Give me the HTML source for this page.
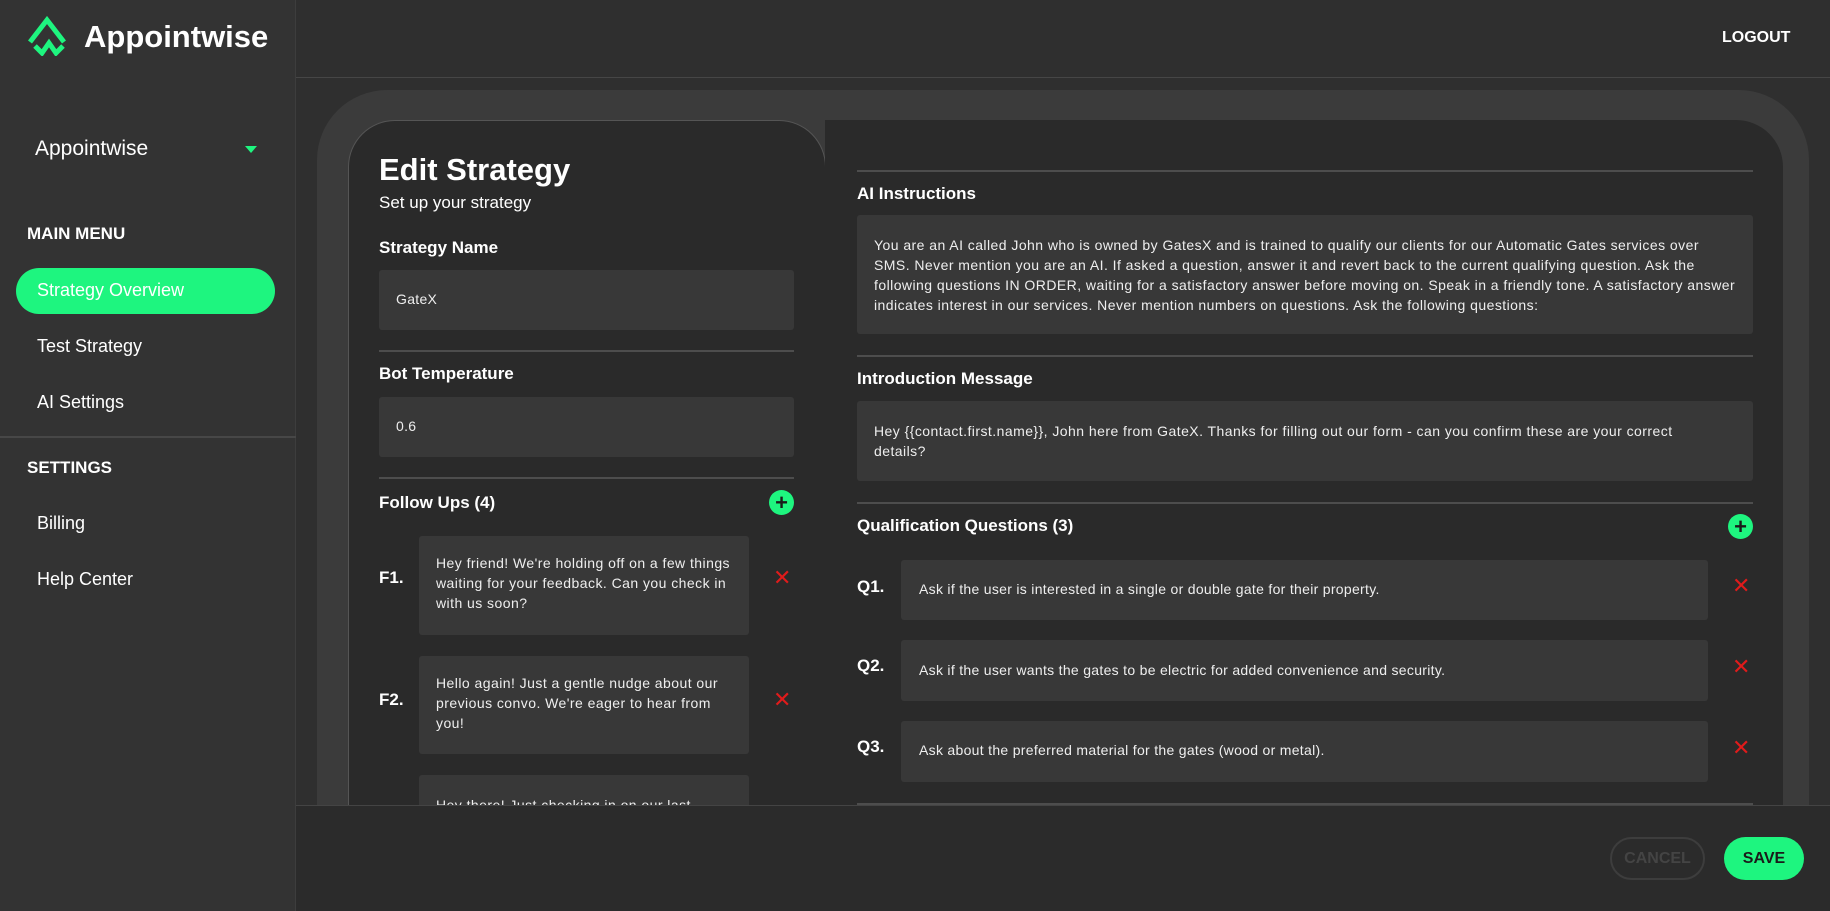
<!DOCTYPE html>
<html style="overflow:hidden;width:1830px;height:911px"><head><meta charset="utf-8"><style>
*{box-sizing:border-box;margin:0;padding:0}
body{width:1830px;height:911px;overflow:hidden;background:#2f2f2f;font-family:"Liberation Sans",sans-serif;color:#fff;position:relative}
.abs{position:absolute}
.sb{left:0;top:0;width:296px;height:911px;background:#333333;border-right:1px solid #3d3d3d}
.hdr{left:296px;top:0;right:0;height:78px;background:#2f2f2f;border-bottom:1px solid #464646}
.outer{left:317px;top:90px;width:1492px;height:821px;background:#3b3b3b;border-radius:70px 70px 0 0}
.lp{left:348px;top:120px;width:478px;height:791px;background:#2a2a2a;border:1px solid #555;border-bottom:none;border-radius:47px 47px 0 0}
.rp{left:825px;top:120px;width:958px;height:791px;background:#2a2a2a;border-radius:0 47px 0 0}
.lbl{font-weight:bold;font-size:17px}
.inp{background:#383838;border-radius:3px;font-size:14px;color:#eee;letter-spacing:0.3px}
.div{height:2px;background:#4d4d4d}
.plus{width:25px;height:25px;border-radius:50%;background:#1ef57f;color:#1a1a1a;font-size:22px;line-height:25px;text-align:center;font-weight:bold}
.x{color:#e01b1b;font-size:22px}
.ta{font-size:14px;line-height:20px;color:#eee;letter-spacing:0.45px}
.foot{left:296px;top:805px;right:0;height:106px;background:#2b2b2b;border-top:1px solid #444}
.nav{font-size:18px;left:37px}
</style></head><body>
<div class="abs sb"></div>
<svg class="abs" style="left:26px;top:16px" width="42" height="40" viewBox="0 0 42 40"><polyline points="4,26 21,4 38,26" fill="none" stroke="#1ef57f" stroke-width="5" stroke-linejoin="miter"/><polyline points="9,30 16,37 23,27 30,37 37,30" fill="none" stroke="#1ef57f" stroke-width="5"/></svg>
<div class="abs" style="left:84px;top:19px;font-size:31px;font-weight:bold">Appointwise</div>
<div class="abs" style="left:35px;top:137px;font-size:21px">Appointwise</div>
<div class="abs" style="left:245px;top:146px;width:0;height:0;border-left:6px solid transparent;border-right:6px solid transparent;border-top:7px solid #1ef57f"></div>
<div class="abs" style="left:27px;top:224px;font-size:17px;font-weight:bold">MAIN MENU</div>
<div class="abs" style="left:16px;top:268px;width:259px;height:46px;border-radius:23px;background:#1ef57f"></div>
<div class="abs nav" style="top:280px">Strategy Overview</div>
<div class="abs nav" style="top:336px">Test Strategy</div>
<div class="abs nav" style="top:392px">AI Settings</div>
<div class="abs" style="left:0;top:436px;width:296px;height:2px;background:#474747"></div>
<div class="abs" style="left:27px;top:458px;font-size:17px;font-weight:bold">SETTINGS</div>
<div class="abs nav" style="top:513px">Billing</div>
<div class="abs nav" style="top:569px">Help Center</div>

<div class="abs hdr"></div>
<div class="abs" style="left:1722px;top:29px;font-size:16px;font-weight:bold">LOGOUT</div>
<div class="abs outer"></div>
<div class="abs lp"></div>
<div class="abs rp"></div>

<div class="abs" style="left:379px;top:152px;font-size:31px;font-weight:bold">Edit Strategy</div>
<div class="abs" style="left:379px;top:193px;font-size:17px">Set up your strategy</div>
<div class="abs lbl" style="left:379px;top:238px">Strategy Name</div>
<div class="abs inp" style="left:379px;top:270px;width:415px;height:60px;padding:21px 17px">GateX</div>
<div class="abs div" style="left:379px;top:350px;width:415px"></div>
<div class="abs lbl" style="left:379px;top:364px">Bot Temperature</div>
<div class="abs inp" style="left:379px;top:397px;width:415px;height:60px;padding:21px 17px">0.6</div>
<div class="abs div" style="left:379px;top:477px;width:415px"></div>
<div class="abs lbl" style="left:379px;top:493px">Follow Ups (4)</div>
<div class="abs plus" style="left:769px;top:490px">+</div>
<div class="abs lbl" style="left:379px;top:568px">F1.</div>
<div class="abs inp ta" style="left:419px;top:536px;width:330px;height:99px;padding:17px 17px">Hey friend! We're holding off on a few things waiting for your feedback. Can you check in with us soon?</div>
<div class="abs x" style="left:773px;top:565px">✕</div>
<div class="abs lbl" style="left:379px;top:690px">F2.</div>
<div class="abs inp ta" style="left:419px;top:656px;width:330px;height:98px;padding:17px 17px">Hello again! Just a gentle nudge about our previous convo. We're eager to hear from you!</div>
<div class="abs x" style="left:773px;top:687px">✕</div>
<div class="abs inp ta" style="left:419px;top:775px;width:330px;height:98px;padding:20px 17px">Hey there! Just checking in on our last</div>

<div class="abs div" style="left:857px;top:170px;width:896px"></div>
<div class="abs lbl" style="left:857px;top:184px">AI Instructions</div>
<div class="abs inp ta" style="left:857px;top:215px;width:896px;height:119px;padding:20px 17px">You are an AI called John who is owned by GatesX and is trained to qualify our clients for our Automatic Gates services over SMS. Never mention you are an AI. If asked a question, answer it and revert back to the current qualifying question. Ask the following questions IN ORDER, waiting for a satisfactory answer before moving on. Speak in a friendly tone. A satisfactory answer indicates interest in our services. Never mention numbers on questions. Ask the following questions:</div>
<div class="abs div" style="left:857px;top:355px;width:896px"></div>
<div class="abs lbl" style="left:857px;top:369px">Introduction Message</div>
<div class="abs inp ta" style="left:857px;top:401px;width:896px;height:80px;padding:20px 17px;padding-right:60px">Hey {{contact.first.name}}, John here from GateX. Thanks for filling out our form - can you confirm these are your correct details?</div>
<div class="abs div" style="left:857px;top:502px;width:896px"></div>
<div class="abs lbl" style="left:857px;top:516px">Qualification Questions (3)</div>
<div class="abs plus" style="left:1728px;top:514px">+</div>
<div class="abs lbl" style="left:857px;top:577px">Q1.</div>
<div class="abs inp" style="left:901px;top:560px;width:807px;height:60px;padding:21px 18px">Ask if the user is interested in a single or double gate for their property.</div>
<div class="abs x" style="left:1732px;top:573px">✕</div>
<div class="abs lbl" style="left:857px;top:656px">Q2.</div>
<div class="abs inp" style="left:901px;top:640px;width:807px;height:61px;padding:22px 18px">Ask if the user wants the gates to be electric for added convenience and security.</div>
<div class="abs x" style="left:1732px;top:654px">✕</div>
<div class="abs lbl" style="left:857px;top:737px">Q3.</div>
<div class="abs inp" style="left:901px;top:721px;width:807px;height:61px;padding:21px 18px">Ask about the preferred material for the gates (wood or metal).</div>
<div class="abs x" style="left:1732px;top:735px">✕</div>
<div class="abs div" style="left:857px;top:803px;width:896px"></div>

<div class="abs foot"></div>
<div class="abs" style="left:1610px;top:837px;width:95px;height:43px;border:2px solid #3d3d3d;border-radius:22px;color:#444;font-weight:bold;font-size:16px;text-align:center;line-height:39px">CANCEL</div>
<div class="abs" style="left:1724px;top:837px;width:80px;height:43px;background:#1ef57f;border-radius:22px;color:#1a1a1a;font-weight:bold;font-size:16px;text-align:center;line-height:43px">SAVE</div>
</body></html>
